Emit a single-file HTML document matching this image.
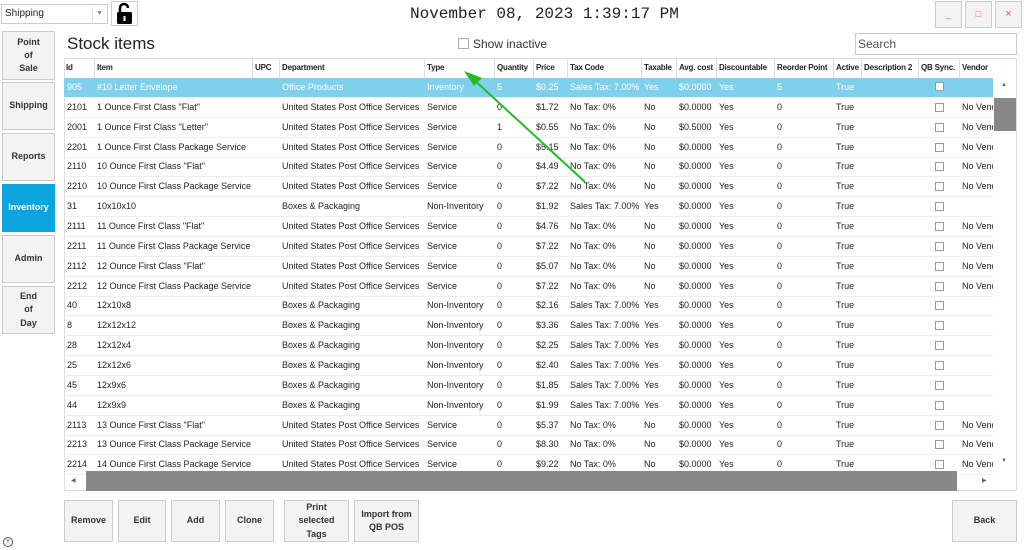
<!DOCTYPE html><html><head><meta charset="utf-8"><style>
body{margin:0;width:1024px;height:550px;background:#fff;font-family:"Liberation Sans",sans-serif;position:relative;overflow:hidden;font-size:9px;color:#222}
.a{position:absolute}
.btn{position:absolute;background:#f3f3f3;border:1px solid #ccc;box-sizing:border-box;display:flex;align-items:center;justify-content:center;text-align:center;font-weight:bold;font-size:9px;color:#333;line-height:1.45}
.c{position:absolute;white-space:nowrap;overflow:hidden;padding-left:3px;box-sizing:border-box}
#hdr .c{padding-left:2px;font-size:8px;letter-spacing:-0.2px}
.row{position:absolute;left:64px;width:929px;height:20px;border-bottom:1px solid #eee;box-sizing:border-box;line-height:19px}
.cb{position:absolute;width:7px;height:7px;border:1px solid #999;background:#fff;top:5px}
</style></head><body>
<div class="a" style="left:1px;top:4px;width:107px;height:20px;border:1px solid #ccc;box-sizing:border-box;font-size:10px;line-height:18px;padding-left:3px">Shipping<span style="position:absolute;right:4px;color:#888;font-size:7px">▼</span><span style="position:absolute;right:14px;top:2px;height:14px;border-left:1px solid #ddd"></span></div>
<div class="a" style="left:111px;top:1px;width:27px;height:25px;border:1px solid #ccc;box-sizing:border-box">
<svg width="25" height="23" viewBox="0 0 25 23"><path d="M8 10V6a4 4 0 0 1 8 0" stroke="#000" stroke-width="2.5" fill="none"/><rect x="5" y="10" width="15" height="12" rx="1.5" fill="#000"/><rect x="11.5" y="14" width="2" height="5" fill="#fff"/></svg></div>
<div class="a" style="left:410px;top:5px;font-family:'Liberation Mono',monospace;font-size:16px;color:#222">November 08, 2023 1:39:17 PM</div>
<div class="btn" style="left:935px;top:1px;width:27px;height:27px;color:#e05070;font-weight:normal">_</div>
<div class="btn" style="left:965px;top:1px;width:27px;height:27px;color:#e05070;font-weight:normal">□</div>
<div class="btn" style="left:995px;top:1px;width:27px;height:27px;color:#e05070;font-weight:normal;font-size:11px">×</div>
<div class="a" style="left:855px;top:33px;width:162px;height:22px;border:1px solid #ccc;box-sizing:border-box;font-size:12px;color:#555;line-height:20px;padding-left:2px">Search</div>
<div class="a" style="left:67px;top:34px;font-size:17px;color:#222">Stock items</div>
<div class="a" style="left:458px;top:38px;width:9px;height:9px;border:1px solid #aaa"></div>
<div class="a" style="left:473px;top:37px;font-size:12px;color:#333">Show inactive</div>
<div class="btn" style="left:2px;top:31px;width:53px;height:49px">Point<br>of<br>Sale</div>
<div class="btn" style="left:2px;top:82px;width:53px;height:48px">Shipping</div>
<div class="btn" style="left:2px;top:133px;width:53px;height:48px">Reports</div>
<div class="btn" style="left:2px;top:184px;width:53px;height:48px;background:#0ba4dc;color:#fff;border-color:#0ba4dc">Inventory</div>
<div class="btn" style="left:2px;top:235px;width:53px;height:48px">Admin</div>
<div class="btn" style="left:2px;top:286px;width:53px;height:48px">End<br>of<br>Day</div>
<div class="a" style="left:3px;top:537px;width:8px;height:8px;border:1px solid #555;border-radius:50%;font-size:6px;text-align:center;line-height:8px">˅</div>
<div class="a" style="left:64px;top:58px;width:953px;height:433px;border:1px solid #ddd;box-sizing:border-box"></div>
<div id="hdr" class="a" style="left:64px;top:58px;width:953px;height:20px;border-bottom:1px solid #ddd;font-weight:bold;line-height:20px"></div>
<div id="rows"></div>
<div class="a" style="left:993px;top:78px;width:23px;height:393px;background:#fff"></div>
<div class="a" style="left:994px;top:98px;width:22px;height:33px;background:#888"></div>
<div class="a" style="left:1001px;top:82px;font-size:6px;color:#666">▲</div>
<div class="a" style="left:1001px;top:458px;font-size:6px;color:#666">▼</div>
<div class="a" style="left:86px;top:471px;width:871px;height:20px;background:#888"></div>
<div class="a" style="left:71px;top:477px;font-size:6px;color:#666">◀</div>
<div class="a" style="left:982px;top:477px;font-size:6px;color:#666">▶</div>
<div class="btn" style="left:64px;top:500px;width:49px;height:42px">Remove</div>
<div class="btn" style="left:118px;top:500px;width:48px;height:42px">Edit</div>
<div class="btn" style="left:171px;top:500px;width:49px;height:42px">Add</div>
<div class="btn" style="left:225px;top:500px;width:49px;height:42px">Clone</div>
<div class="btn" style="left:284px;top:500px;width:65px;height:42px">Print<br>selected<br>Tags</div>
<div class="btn" style="left:354px;top:500px;width:65px;height:42px">Import from<br>QB POS</div>
<div class="btn" style="left:952px;top:500px;width:65px;height:42px">Back</div>
<svg class="a" style="left:0;top:0" width="1024" height="550"><line x1="585" y1="182" x2="472" y2="78" stroke="#22bb22" stroke-width="2"/><polygon points="464,71 482,78 474,86" fill="#22bb22"/></svg>
<script>
var X=[64,94,252,279,424,494,533,567,641,676,716,774,833,861,918,959];
var W=[30,158,27,145,70,39,34,74,35,40,58,59,28,57,41,34];
var H=["Id","Item","UPC","Department","Type","Quantity","Price","Tax Code","Taxable","Avg. cost","Discountable","Reorder Point","Active","Description 2","QB Sync.","Vendor"];
var h='';H.forEach(function(t,i){h+='<div class="c" style="left:'+(X[i]-64)+'px;width:'+W[i]+'px;border-left:'+(i?'1px solid #ddd':'0')+';height:20px">'+t+'</div>'});
document.getElementById('hdr').innerHTML=h;
var U="United States Post Office Services",B="Boxes & Packaging",N="No Tax: 0%",S="Sales Tax: 7.00%";
var R=[["905","#10 Letter Envelope","Office Products","Inventory","5","$0.25",S,"Yes","$0.0000","5",""],
["2101",'1 Ounce First Class "Flat"',U,"Service","0","$1.72",N,"No","$0.0000","0","No Vendor"],
["2001",'1 Ounce First Class "Letter"',U,"Service","1","$0.55",N,"No","$0.5000","0","No Vendor"],
["2201","1 Ounce First Class Package Service",U,"Service","0","$5.15",N,"No","$0.0000","0","No Vendor"],
["2110",'10 Ounce First Class "Flat"',U,"Service","0","$4.49",N,"No","$0.0000","0","No Vendor"],
["2210","10 Ounce First Class Package Service",U,"Service","0","$7.22",N,"No","$0.0000","0","No Vendor"],
["31","10x10x10",B,"Non-Inventory","0","$1.92",S,"Yes","$0.0000","0",""],
["2111",'11 Ounce First Class "Flat"',U,"Service","0","$4.76",N,"No","$0.0000","0","No Vendor"],
["2211","11 Ounce First Class Package Service",U,"Service","0","$7.22",N,"No","$0.0000","0","No Vendor"],
["2112",'12 Ounce First Class "Flat"',U,"Service","0","$5.07",N,"No","$0.0000","0","No Vendor"],
["2212","12 Ounce First Class Package Service",U,"Service","0","$7.22",N,"No","$0.0000","0","No Vendor"],
["40","12x10x8",B,"Non-Inventory","0","$2.16",S,"Yes","$0.0000","0",""],
["8","12x12x12",B,"Non-Inventory","0","$3.36",S,"Yes","$0.0000","0",""],
["28","12x12x4",B,"Non-Inventory","0","$2.25",S,"Yes","$0.0000","0",""],
["25","12x12x6",B,"Non-Inventory","0","$2.40",S,"Yes","$0.0000","0",""],
["45","12x9x6",B,"Non-Inventory","0","$1.85",S,"Yes","$0.0000","0",""],
["44","12x9x9",B,"Non-Inventory","0","$1.99",S,"Yes","$0.0000","0",""],
["2113",'13 Ounce First Class "Flat"',U,"Service","0","$5.37",N,"No","$0.0000","0","No Vendor"],
["2213","13 Ounce First Class Package Service",U,"Service","0","$8.30",N,"No","$0.0000","0","No Vendor"],
["2214","14 Ounce First Class Package Service",U,"Service","0","$9.22",N,"No","$0.0000","0","No Vendor"]];
var o='';R.forEach(function(r,k){var sel=k==0;var v=[r[0],r[1],"",r[2],r[3],r[4],r[5],r[6],r[7],r[8],"Yes",r[9],"True","","",r[10]];
o+='<div class="row" style="top:'+(78+k*19.85).toFixed(1)+'px;'+(sel?'background:#7fd0ec;color:#fff;':'')+'">';
v.forEach(function(t,i){if(t)o+='<div class="c" style="left:'+(X[i]-64)+'px;width:'+W[i]+'px">'+t.replace(/&/g,'&amp;')+'</div>'});
o+='<div class="cb" style="left:871px;top:'+(sel?4:5)+'px"></div></div>'});
document.getElementById('rows').innerHTML=o;
</script>
</body></html>
